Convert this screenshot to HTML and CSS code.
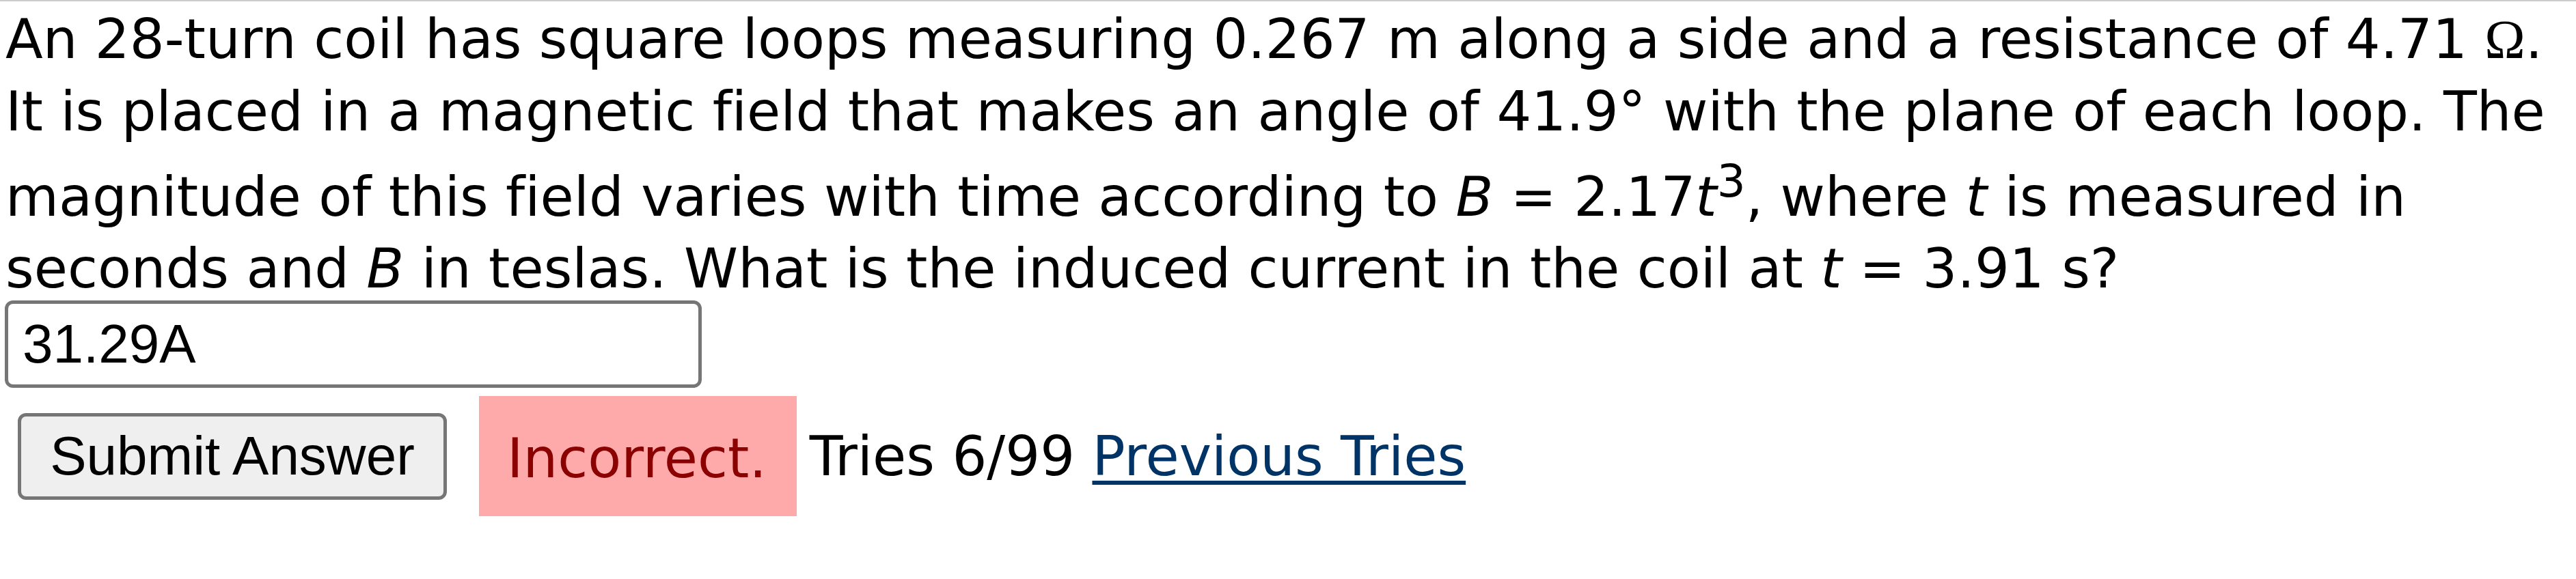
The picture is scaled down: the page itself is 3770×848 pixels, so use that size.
FILE: index.html
```html
<!DOCTYPE html>
<html lang="en">
<head>
<meta charset="utf-8">
<title>Problem</title>
<link rel="stylesheet" href="styles.css">
</head>
<body>
<div class="rule"></div>
<div class="content">
  <p class="question">An 28-turn coil has square loops measuring 0.267 m along a side and a resistance of 4.71 <span class="ohm">&Omega;</span>. It is placed in a magnetic field that makes an angle of 41.9&deg; with the plane of each loop. The magnitude of this field varies with time according to <i>B</i> = 2.17<i>t</i><sup>3</sup>, where <i>t</i> is measured in seconds and <i>B</i> in teslas. What is the induced current in the coil at <i>t</i> = 3.91 s?</p>
  <input class="answer" type="text" value="31.29A">
  <div class="actions">
    <button class="submit" type="button">Submit Answer</button>
    <span class="status">Incorrect.</span>
    <span class="tries">Tries 6/99 <a href="#" class="prev">Previous Tries</a></span>
  </div>
</div>
</body>
</html>
```
FILE: styles.css
```css
html, body {
  margin: 0;
  padding: 0;
  background: #ffffff;
}

body {
  font-family: "DejaVu Sans", Verdana, sans-serif;
  font-size: 80px;
  color: #000000;
  font-variant-ligatures: none;
}

.rule {
  height: 2px;
  background: #cccccc;
}

.content {
  padding: 0 8px;
}

.question {
  margin: 3px 0 0 0;
  line-height: 105px;
}

.question i {
  font-style: italic;
}

.question sup {
  font-size: 66px;
  line-height: 99px;
  vertical-align: 28px;
}

.ohm {
  font-family: "Liberation Serif", "Times New Roman", serif;
}

.answer {
  display: block;
  box-sizing: border-box;
  width: 1020px;
  height: 128px;
  margin: -6px 0 0 -1px;
  padding: 0 21px;
  border: 5px solid #767676;
  border-radius: 12px;
  font-family: "Liberation Sans", Arial, sans-serif;
  font-size: 80px;
  color: #000000;
  background: #ffffff;
  outline: none;
}

.actions {
  display: flex;
  align-items: center;
  margin-top: 12px;
}

.submit {
  box-sizing: border-box;
  width: 628px;
  height: 127px;
  margin-left: 18px;
  padding: 0;
  border: 5px solid #767676;
  border-radius: 12px;
  background: #efefef;
  font-family: "Liberation Sans", Arial, sans-serif;
  font-size: 80px;
  color: #000000;
}

.status {
  margin-left: 47px;
  padding: 39px 44px 32px 41px;
  line-height: 105px;
  background: #ffaaaa;
  color: #8b0000;
}

.tries {
  margin-left: 19px;
  line-height: 105px;
}

.prev {
  color: #003366;
  text-decoration: underline;
  text-decoration-thickness: 6px;
  text-underline-offset: 8px;
}
```
